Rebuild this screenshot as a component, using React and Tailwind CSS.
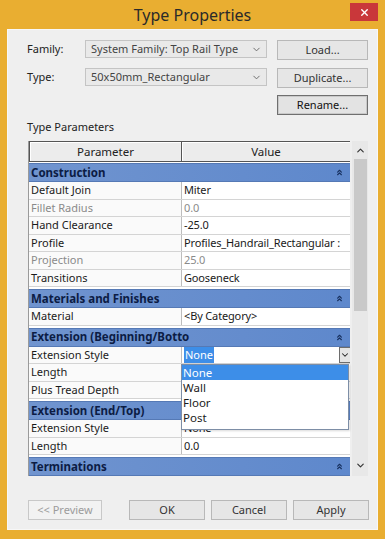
import { ChevronDown, ChevronUp, ChevronsUp, X } from "lucide-react";

const FONT = { fontFamily: '"Noto Sans", "Open Sans", sans-serif' };

const GRUPOS = [
  {
    titulo: "Construction",
    filas: [
      { p: "Default Join", v: "Miter" },
      { p: "Fillet Radius", v: "0.0", off: true },
      { p: "Hand Clearance", v: "-25.0" },
      { p: "Profile", v: "Profiles_Handrail_Rectangular :" },
      { p: "Projection", v: "25.0", off: true },
      { p: "Transitions", v: "Gooseneck" },
    ],
  },
  { titulo: "Materials and Finishes", filas: [{ p: "Material", v: "<By Category>" }] },
  {
    titulo: "Extension (Beginning/Botto",
    filas: [
      { p: "Extension Style", v: "None", combo: true },
      { p: "Length", v: "" },
      { p: "Plus Tread Depth", v: "" },
    ],
  },
  {
    titulo: "Extension (End/Top)",
    filas: [
      { p: "Extension Style", v: "None" },
      { p: "Length", v: "0.0" },
    ],
  },
  { titulo: "Terminations", filas: [] },
];

function Combo({ value, width }) {
  return (
    <div
      className="flex h-[18px] items-center justify-between border border-[#c4c4c4] bg-[#e9e9e9] pl-[5px] pr-[4px] text-[11px] text-[#444]"
      style={{ width }}
    >
      <span>{value}</span>
      <ChevronDown size={11} strokeWidth={2} className="text-[#666]" />
    </div>
  );
}

function Boton({ children, width, variant = "normal" }) {
  const estilos = {
    normal: "border-[#b8b8b8] bg-[#e6e6e6] text-[#333]",
    foco: "border-[#6f6f6f] bg-[#e3e3e3] text-[#111] shadow-[inset_0_0_0_1px_#c9c9c9]",
    off: "border-[#c8c8c8] bg-[#f2f2f2] text-[#9c9c9c]",
  };
  return (
    <div
      className={`flex h-[20px] items-center justify-center border text-[11px] ${estilos[variant]}`}
      style={{ width }}
    >
      {children}
    </div>
  );
}

function Grupo({ titulo }) {
  return (
    <div className="flex h-[19px] items-center justify-between border-y border-[#5579b5] bg-gradient-to-r from-[#7094cf] to-[#5e88cc] pl-[2px] pr-[6px]">
      <span className="text-[11.5px] font-bold text-[#0c1c44]">{titulo}</span>
      <ChevronsUp size={9} strokeWidth={3} className="text-[#17305e]" />
    </div>
  );
}

function Fila({ p, v, off, combo }) {
  return (
    <div className="grid h-[17.5px] grid-cols-[153px_169px] border-b border-[#d4d4d4] text-[11px] leading-[16px]">
      <div className={`border-r border-[#bdbdbd] bg-[#fafafa] pl-[2px] ${off ? "text-[#8a8a8a]" : "text-[#1a1a1a]"}`}>
        {p}
      </div>
      {combo ? (
        <div className="flex items-center justify-between bg-white pl-[2px]">
          <span className="bg-[#3d8ee8] px-[1px] text-white">{v}</span>
          <div className="flex h-[16px] w-[12px] items-center justify-center border border-[#6d6d6d] bg-[#e4e4e4]">
            <ChevronDown size={10} strokeWidth={2.5} className="text-[#222]" />
          </div>
        </div>
      ) : (
        <div
          className={`overflow-hidden whitespace-nowrap bg-white pl-[2px] tracking-[-0.15px] ${off ? "text-[#8a8a8a]" : "text-[#1a1a1a]"}`}
        >
          {v}
        </div>
      )}
    </div>
  );
}

export default function App() {
  return (
    <div className="flex h-[539px] w-[385px] flex-col bg-[#e9ae31]" style={FONT}>
      <div className="relative flex h-[29px] items-center justify-center">
        <span className="text-[16px] text-[#2a2a2a]">Type Properties</span>
        <div className="absolute right-[7px] top-[3px] flex h-[18px] w-[28px] items-center justify-center bg-[#c9373a]">
          <X size={11} strokeWidth={3} className="text-white" />
        </div>
      </div>

      <div className="mx-[7px] flex h-[501px] flex-col border border-[#f7f7f7] bg-[#efefef] pl-[19px]">
        <div className="mt-[10px] flex items-start text-[11px] text-[#222]">
          <span className="w-[58px] leading-[18px]">Family:</span>
          <Combo value="System Family: Top Rail Type" width={182} />
          <div className="ml-[10px]">
            <Boton width={91}>Load...</Boton>
          </div>
        </div>
        <div className="mt-[8px] flex items-start text-[11px] text-[#222]">
          <span className="w-[58px] leading-[18px]">Type:</span>
          <Combo value="50x50mm_Rectangular" width={182} />
          <div className="ml-[10px]">
            <Boton width={91}>Duplicate...</Boton>
          </div>
        </div>
        <div className="mt-[7px] ml-[250px]">
          <Boton width={91} variant="foco">
            Rename...
          </Boton>
        </div>
        <div className="mt-[5px] text-[11px] leading-[14px] text-[#222]">Type Parameters</div>

        <div className="relative mt-[7px] ml-[1px] flex h-[335px]">
          <div className="flex w-[322px] flex-col overflow-hidden border-l border-[#9a9a9a] bg-white">
            <div className="grid h-[21px] grid-cols-[153px_169px] text-[11.5px] text-[#222]">
              <div className="flex items-center justify-center border border-[#555] bg-[#ececec] shadow-[inset_1px_1px_0_#fff]">
                Parameter
              </div>
              <div className="flex items-center justify-center border border-l-0 border-[#555] bg-[#ececec] shadow-[inset_1px_1px_0_#fff]">
                Value
              </div>
            </div>
            {GRUPOS.map((g, i) => (
              <div key={g.titulo} className={`flex flex-col ${i === 0 ? "mt-[1px]" : "mt-[2px]"}`}>
                <Grupo titulo={g.titulo} />
                {g.filas.map((f, j) => (
                  <Fila key={j} {...f} />
                ))}
              </div>
            ))}
          </div>

          <div className="ml-[2px] flex w-[16px] flex-col items-center bg-[#e8e8e8]">
            <ChevronUp size={11} strokeWidth={2.5} className="mt-[4px] text-[#333]" />
            <div className="mt-[3px] h-[152px] w-[13px] bg-[#c9c9c9]" />
            <div className="flex-1" />
            <ChevronDown size={11} strokeWidth={2.5} className="mb-[5px] text-[#333]" />
          </div>

          <div className="absolute left-[153px] top-[223px] flex w-[168px] flex-col border border-[#7d8ea6] bg-white pb-[4px] text-[11.5px] leading-[15px] text-[#1a1a1a] shadow-[1px_1px_2px_rgba(0,0,0,0.15)]">
            <div className="bg-[#3d8ee8] pl-[1px] text-white">None</div>
            <div className="pl-[1px]">Wall</div>
            <div className="pl-[1px]">Floor</div>
            <div className="pl-[1px]">Post</div>
          </div>
        </div>

        <div className="mt-[24px] flex items-start">
          <div className="ml-[1px]">
            <Boton width={74} variant="off">
              {"<< Preview"}
            </Boton>
          </div>
          <div className="ml-[27px]">
            <Boton width={76}>OK</Boton>
          </div>
          <div className="ml-[6px]">
            <Boton width={76}>Cancel</Boton>
          </div>
          <div className="ml-[6px]">
            <Boton width={76}>Apply</Boton>
          </div>
        </div>
      </div>
    </div>
  );
}
